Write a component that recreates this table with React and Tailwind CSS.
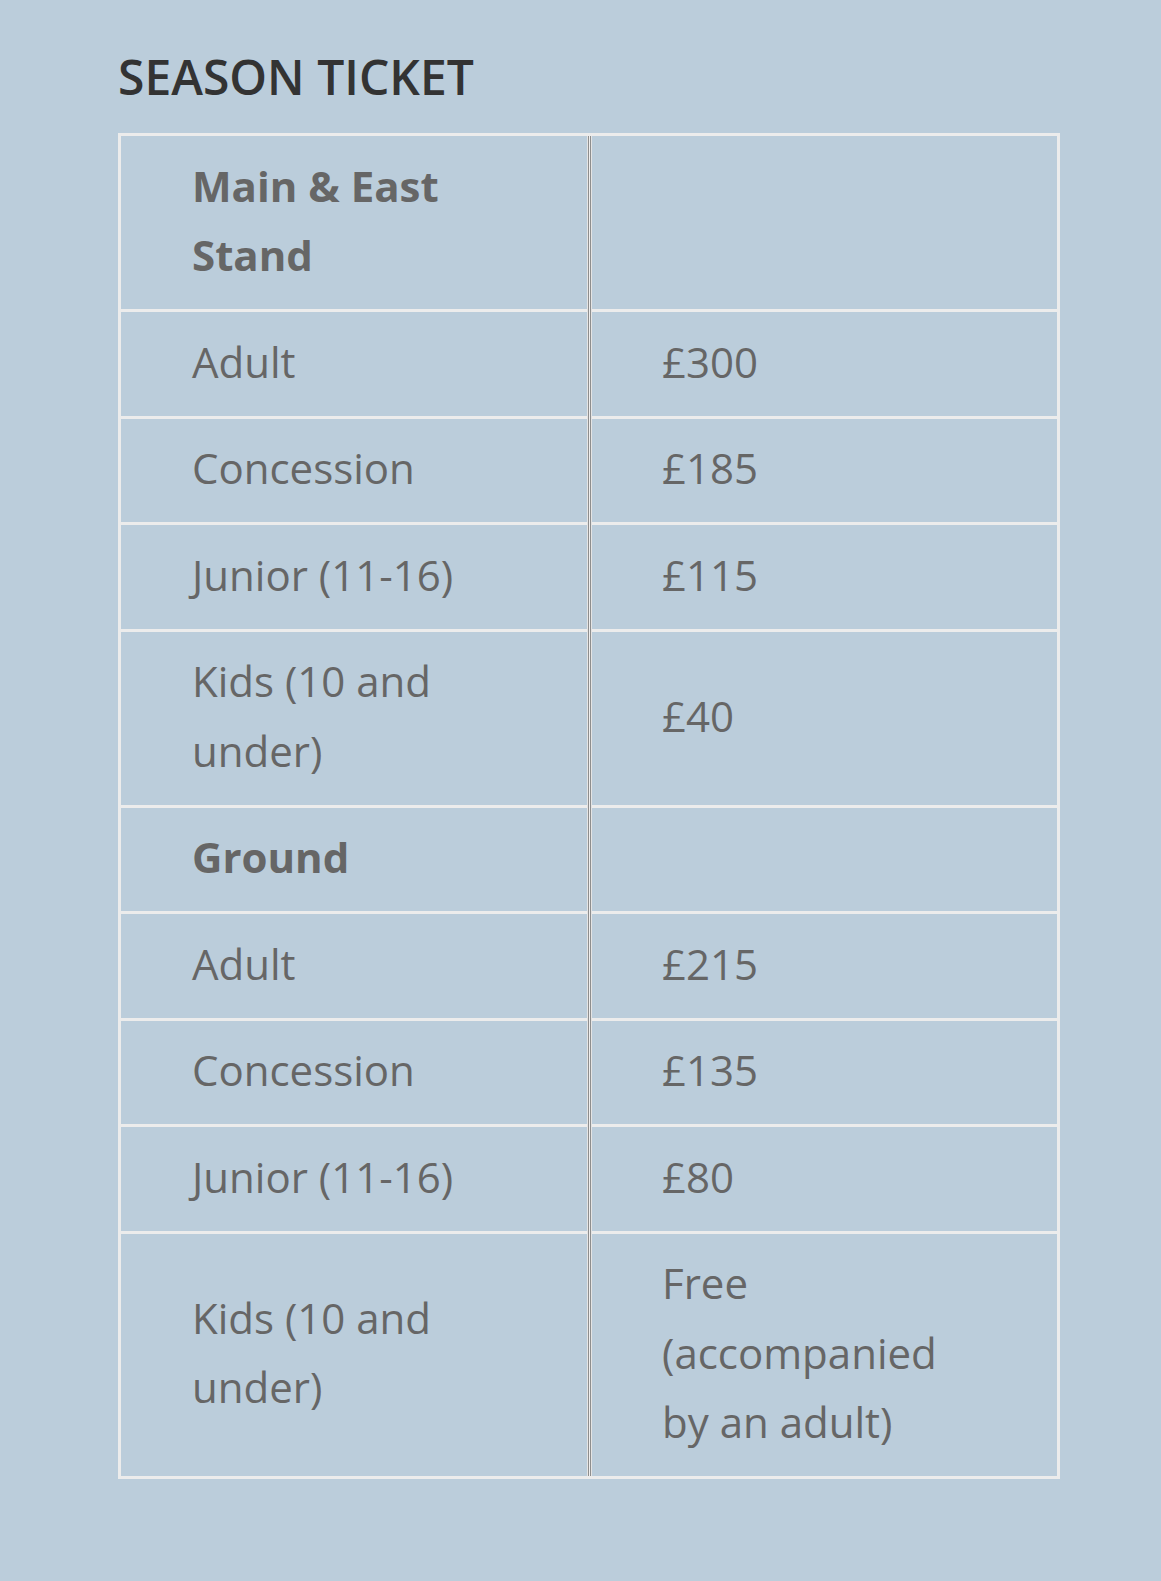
import React from "react";

const rows = [
  { label: "Main & East Stand", price: "", bold: true },
  { label: "Adult", price: "£300" },
  { label: "Concession", price: "£185" },
  { label: "Junior (11-16)", price: "£115" },
  { label: "Kids (10 and under)", price: "£40" },
  { label: "Ground", price: "", bold: true },
  { label: "Adult", price: "£215" },
  { label: "Concession", price: "£135" },
  { label: "Junior (11-16)", price: "£80" },
  { label: "Kids (10 and under)", price: "Free (accompanied by an adult)" },
];

function Divider() {
  return (
    <div className="flex self-stretch">
      <div className="w-px bg-[#e4e4e4]" />
      <div className="w-px bg-[#8e8e8e]" />
      <div className="w-px bg-[#efefef]" />
      <div className="w-px bg-[#8e8e8e]" />
      <div className="w-px bg-[#e4e4e4]" />
    </div>
  );
}

export default function App() {
  return (
    <div
      className="min-h-[1581px] w-full bg-[#bbcddb] pl-[118px] pt-[49px] text-[#666666]"
      style={{ fontFamily: '"Open Sans", "Liberation Sans", sans-serif' }}
    >
      <h2 className="text-[48px] font-semibold leading-[56px] text-[#333333]">
        SEASON TICKET
      </h2>

      <div className="mt-[28px] w-[942px] border-[3px] border-[#ececec]">
        {rows.map((row, i) => {
          const last = i === rows.length - 1;
          const cellBorder = last ? "" : "border-b-[3px] border-[#ececec]";
          return (
            <div key={i} className="grid grid-cols-[466px_5px_465px]">
              <div
                className={`flex items-center pt-[14.5px] pb-[19.5px] pl-[71px] pr-[70px] text-[42px] leading-[69.5px] ${cellBorder} ${
                  row.bold ? "font-bold" : ""
                }`}
              >
                <span>{row.label}</span>
              </div>
              <Divider />
              <div
                className={`flex items-center pt-[14.5px] pb-[19.5px] pl-[70px] pr-[70px] text-[42px] leading-[69.5px] ${cellBorder}`}
              >
                <span>{row.price}</span>
              </div>
            </div>
          );
        })}
      </div>
    </div>
  );
}
